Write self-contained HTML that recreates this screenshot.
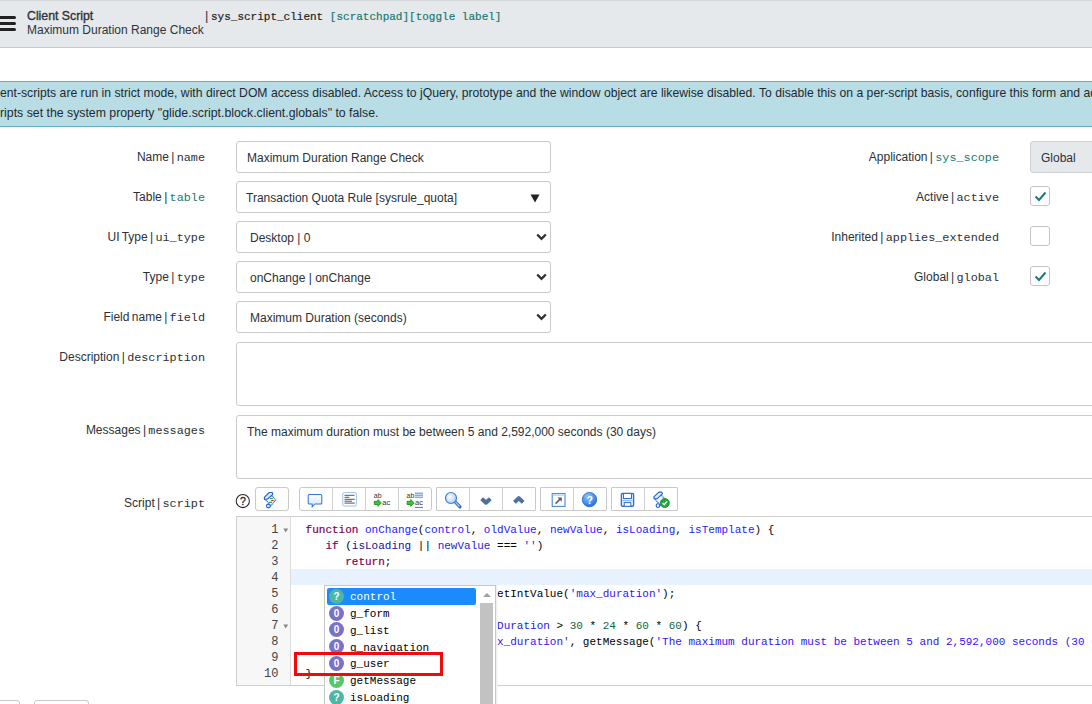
<!DOCTYPE html>
<html><head><meta charset="utf-8">
<style>
*{box-sizing:border-box;margin:0;padding:0}
html,body{width:1092px;height:704px;overflow:hidden;background:#fff}
body{position:relative;font-family:"Liberation Sans",sans-serif;font-size:12px;color:#2b3137}
.a{position:absolute;white-space:pre}
.mono{font-family:"Liberation Mono",monospace}
#hdr{position:absolute;left:0;top:0;width:1092px;height:48px;background:#e6e9eb;border-top:1px solid #d5d8db;border-bottom:1px solid #c6c9cc}
.bar{position:absolute;left:0;width:16px;height:3px;background:#222;border-radius:0 2px 2px 0}
#info{position:absolute;left:-20px;top:81px;width:1140px;height:46px;background:#b8dde4;border:1px solid #5cb2c2}
.inp{position:absolute;left:236px;width:315px;height:32px;border:1px solid #cbcbcb;border-radius:3px;background:#fff}
.lbl{position:absolute;text-align:right;word-spacing:-1px;white-space:pre;line-height:20px;color:#2b3137}
.lm{font-family:"Liberation Mono",monospace;font-size:11.8px}
.teal{color:#177a70}
.chk{position:absolute;left:1030px;width:20px;height:20px;border:1px solid #c4c4c4;border-radius:3px;background:#fff}
.btn{position:absolute;top:487px;height:24px;border:1px solid #c9c9c9;border-radius:3px;background:#fff}
.div{position:absolute;top:0;width:1px;height:22px;background:#d0d0d0}
#ed{position:absolute;left:236px;top:516px;width:870px;height:170px;border:1px solid #cfcfcf;background:#fff}
#gut{position:absolute;left:0;top:0;width:54px;height:168px;background:#f7f7f7;border-right:1px solid #dddddd}
.ln{position:absolute;margin-top:0.5px;right:826.5px;text-align:right;font-family:"Liberation Mono",monospace;font-size:12px;line-height:16px;color:#444}
.code{position:absolute;left:68.6px;margin-top:1px;font-family:"Liberation Mono",monospace;font-size:11px;line-height:16px;color:#000;white-space:pre}
.kw{color:#7f0055;-webkit-text-stroke:0.2px #7f0055}
.fn{color:#1c1cff}
.vr{color:#1c1cff}
.v2{color:#14148f}
.v3{color:#2424d0}
.st{color:#3414f0}
.nm{color:#116644}
#pop{position:absolute;left:324px;top:585px;width:172px;height:130px;border:1px solid #c8c8c8;background:#fff;box-shadow:1.5px 0 0 #f0f0f0}
.it{position:absolute;margin-top:0.8px;left:25px;font-family:"Liberation Mono",monospace;font-size:11px;line-height:16px;color:#000}
.ic{position:absolute;left:4px;width:15px;height:15px;border-radius:50%;color:#fff;font-family:"Liberation Sans",sans-serif;font-weight:bold;font-size:10px;line-height:15px;text-align:center}
</style></head><body>

<div id="hdr">
  <div class="bar" style="top:15px"></div>
  <div class="bar" style="top:21px"></div>
  <div class="bar" style="top:27px"></div>
  <div class="a" style="left:27px;top:6px;font-size:12.3px;-webkit-text-stroke:0.35px #2e3338;color:#2e3338;line-height:18px">Client Script</div>
  <div class="a" style="left:27px;top:20px;font-size:12px;color:#2e3338;line-height:18px">Maximum Duration Range Check</div>
  <div class="a" style="left:205px;top:6px;font-size:13px;color:#2e3338;line-height:18px">|</div>
  <div class="a mono" style="left:211px;top:7px;font-size:11px;color:#222;-webkit-text-stroke:0.2px #222;line-height:18px">sys_script_client <span class="teal" style="-webkit-text-stroke:0.2px #177a70">[scratchpad][toggle label]</span></div>
</div>

<div id="info"></div>
<div class="a" style="left:0;top:83px;font-size:12.2px;line-height:20px;color:#1f2a33">ent-scripts are run in strict mode, with direct DOM access disabled. Access to jQuery, prototype and the window object are likewise disabled. To disable this on a per-script basis, configure this form and add the "isolate_script" column.</div>
<div class="a" style="left:0;top:103px;font-size:12.3px;line-height:20px;color:#1f2a33">ripts set the system property "glide.script.block.client.globals" to false.</div>

<!-- left labels -->
<div class="lbl" style="right:887px;top:147px">Name | <span class="lm">name</span></div>
<div class="lbl" style="right:887px;top:187px">Table | <span class="lm teal">table</span></div>
<div class="lbl" style="right:887px;top:227px">UI Type | <span class="lm">ui_type</span></div>
<div class="lbl" style="right:887px;top:267px">Type | <span class="lm">type</span></div>
<div class="lbl" style="right:887px;top:307px">Field name | <span class="lm">field</span></div>
<div class="lbl" style="right:887px;top:347px">Description | <span class="lm">description</span></div>
<div class="lbl" style="right:887px;top:420px">Messages | <span class="lm">messages</span></div>
<div class="lbl" style="right:887px;top:493px">Script | <span class="lm">script</span></div>

<!-- inputs -->
<div class="inp" style="top:141px"><div class="a" style="left:10px;top:6px;line-height:20px">Maximum Duration Range Check</div></div>
<div class="inp" style="top:181px"><div class="a" style="left:9px;top:6px;line-height:20px">Transaction Quota Rule [sysrule_quota]</div>
  <svg class="a" style="left:293px;top:12px" width="10" height="9" viewBox="0 0 10 9"><path d="M0.5 0.5H9.5L5 8.5Z" fill="#222"/></svg></div>
<div class="inp" style="top:221px"><div class="a" style="left:13px;top:6px;line-height:20px">Desktop | 0</div>
  <svg class="a" style="left:299px;top:11px" width="11" height="8" viewBox="0 0 11 8"><path d="M1.2 1.5L5.5 5.8L9.8 1.5" fill="none" stroke="#2b3137" stroke-width="2.3"/></svg></div>
<div class="inp" style="top:261px"><div class="a" style="left:13px;top:6px;line-height:20px">onChange | onChange</div>
  <svg class="a" style="left:299px;top:11px" width="11" height="8" viewBox="0 0 11 8"><path d="M1.2 1.5L5.5 5.8L9.8 1.5" fill="none" stroke="#2b3137" stroke-width="2.3"/></svg></div>
<div class="inp" style="top:301px"><div class="a" style="left:13px;top:6px;line-height:20px">Maximum Duration (seconds)</div>
  <svg class="a" style="left:299px;top:11px" width="11" height="8" viewBox="0 0 11 8"><path d="M1.2 1.5L5.5 5.8L9.8 1.5" fill="none" stroke="#2b3137" stroke-width="2.3"/></svg></div>
<div class="inp" style="top:342px;width:900px;height:64px"></div>
<div class="inp" style="top:415px;width:900px;height:64px"><div class="a" style="left:10px;top:6px;line-height:20px">The maximum duration must be between 5 and 2,592,000 seconds (30 days)</div></div>

<!-- right column -->
<div class="lbl" style="right:93px;top:147px">Application | <span class="lm teal">sys_scope</span></div>
<div class="lbl" style="right:93px;top:187px">Active | <span class="lm">active</span></div>
<div class="lbl" style="right:93px;top:227px">Inherited | <span class="lm">applies_extended</span></div>
<div class="lbl" style="right:93px;top:267px">Global | <span class="lm">global</span></div>
<div class="inp" style="left:1030px;top:141px;width:120px;background:#e6e9eb;border-color:#cfd2d4"><div class="a" style="left:10px;top:6px;line-height:20px">Global</div></div>
<div class="chk" style="top:186px"><svg class="a" style="left:3px;top:4px" width="13" height="11" viewBox="0 0 13 11"><path d="M1.5 5.5L5 9L11.5 1.5" fill="none" stroke="#1f7a73" stroke-width="2"/></svg></div>
<div class="chk" style="top:226px"></div>
<div class="chk" style="top:266px"><svg class="a" style="left:3px;top:4px" width="13" height="11" viewBox="0 0 13 11"><path d="M1.5 5.5L5 9L11.5 1.5" fill="none" stroke="#1f7a73" stroke-width="2"/></svg></div>

<!-- toolbar -->
<svg class="a" style="left:230px;top:485px;z-index:2" width="460" height="30" viewBox="230 485 460 30">
<defs>
<linearGradient id="gb" x1="0" y1="0" x2="0" y2="1"><stop offset="0" stop-color="#ffffff"/><stop offset="1" stop-color="#d6e4f7"/></linearGradient>
<radialGradient id="gm" cx="0.4" cy="0.4" r="0.7"><stop offset="0" stop-color="#ffffff"/><stop offset="1" stop-color="#9ccaf5"/></radialGradient>
<radialGradient id="gh" cx="0.4" cy="0.3" r="0.8"><stop offset="0" stop-color="#8cc8ff"/><stop offset="1" stop-color="#1565d8"/></radialGradient>
</defs>
<!-- help circle -->
<circle cx="242.8" cy="501" r="6.6" fill="none" stroke="#22252a" stroke-width="1.05"/>
<text x="242.9" y="505.2" font-family="Liberation Sans" font-size="10.5" text-anchor="middle" fill="#22252a" stroke="#22252a" stroke-width="0.3">?</text>
<!-- scroll -->
<path d="M264.6 498.4 L268.8 503.6 L270 506.6 L275.9 500 L271.6 495.4 Z" fill="#f2f7ff" stroke="#2a6ae0" stroke-width="1.1" stroke-linejoin="round" stroke-dasharray="1.3 0.5"/>
<path d="M264.3 497.3 L269.3 492.5 L272.2 492.5 L272.8 494.3 L267.6 499 L264.5 499.4 Z" fill="#dfeafb" stroke="#1e5fd8" stroke-width="1.1" stroke-linejoin="round"/>
<circle cx="268.4" cy="506" r="1.9" fill="#e8f0ff" stroke="#1e5fd8" stroke-width="1.1"/>
<path d="M270 498.5h2.8M269.1 502.4h2.8" stroke="#1fae1f" stroke-width="1.1"/>
<path d="M271.2 500.5h2.6" stroke="#e02818" stroke-width="1.1"/>
<!-- speech bubble -->
<path d="M309.2 494.5 H320.8 Q321.8 494.5 321.8 495.5 V503 Q321.8 504 320.8 504 H315 L312.2 506.8 V504 H309.2 Q308.2 504 308.2 503 V495.5 Q308.2 494.5 309.2 494.5 Z" fill="url(#gb)" stroke="#3276d8" stroke-width="1.05"/>
<!-- format doc -->
<rect x="342.8" y="492.6" width="13.6" height="13.4" rx="1.5" fill="#fff" stroke="#9dbff0" stroke-width="1"/>
<path d="M344.5 495.3h10M344.5 497.3h4.8M344.5 499.3h10.3M344.5 501.2h7.5M344.5 503.1h10.3" stroke="#555" stroke-width="1"/>
<!-- replace -->
<text x="373.8" y="498" font-family="Liberation Sans" font-size="7" fill="#333">ab</text>
<path d="M374.3 501.3h3.6v-1.8l3.5 3.4l-3.5 3.4v-1.8h-3.6z" fill="#3cc43c" stroke="#138a13" stroke-width="0.8"/>
<text x="382.3" y="505.2" font-family="Liberation Sans" font-size="7.5" fill="#333">ac</text>
<!-- replace all -->
<text x="406.6" y="498" font-family="Liberation Sans" font-size="7" fill="#333">ab</text>
<path d="M415 493.2h8M415 495.2h8M415 497.2h8" stroke="#3a78d8" stroke-width="0.9"/>
<path d="M407.1 501.3h3.6v-1.8l3.5 3.4l-3.5 3.4v-1.8h-3.6z" fill="#3cc43c" stroke="#138a13" stroke-width="0.8"/>
<text x="415" y="505.2" font-family="Liberation Sans" font-size="7.5" fill="#333">ac</text>
<path d="M415 507.4h8" stroke="#3a78d8" stroke-width="1"/>
<!-- magnifier -->
<path d="M455.2 501.8 L460 506.8" stroke="#2f66c0" stroke-width="3.2" stroke-linecap="round"/>
<path d="M455.4 502 L459.6 506.4" stroke="#9cc6f0" stroke-width="1.4"/>
<circle cx="451" cy="498" r="5.5" fill="url(#gm)" stroke="#3d7fd9" stroke-width="1.2"/>
<!-- down chevron -->
<path d="M481.7 498.8 L486 502.6 L490.3 498.8" fill="none" stroke="#3a7be0" stroke-width="4.2" stroke-linejoin="round"/>
<path d="M481.7 498.8 L486 502.6 L490.3 498.8" fill="none" stroke="#6a6a6a" stroke-width="2.2" stroke-linejoin="round"/>
<!-- up chevron -->
<path d="M514.5 502.2 L518.8 498.3 L523.1 502.2" fill="none" stroke="#3a7be0" stroke-width="4.2" stroke-linejoin="round"/>
<path d="M514.5 502.2 L518.8 498.3 L523.1 502.2" fill="none" stroke="#6a6a6a" stroke-width="2.2" stroke-linejoin="round"/>
<!-- open window -->
<rect x="552.2" y="493.6" width="12.8" height="12.8" fill="#fff" stroke="#4a86d8" stroke-width="1.1"/>
<path d="M552.8 495.2h11.6" stroke="#c4daf4" stroke-width="1.6"/>
<path d="M555.6 503.6 L560.6 498.6" stroke="#506070" stroke-width="1.5"/>
<path d="M557.4 497.4h4.4v4.4z" fill="#506070"/>
<!-- help blue -->
<circle cx="589.5" cy="499.6" r="7.2" fill="url(#gh)" stroke="#2a66c8" stroke-width="0.8"/>
<text x="589.6" y="503.6" font-family="Liberation Sans" font-size="10.5" font-weight="bold" text-anchor="middle" fill="#fff">?</text>
<!-- floppy -->
<rect x="621.4" y="493.5" width="12.2" height="12.8" rx="1.2" fill="#eef5ff" stroke="#2f6fd8" stroke-width="1.4"/>
<rect x="623.5" y="493.5" width="8" height="5" fill="#fff" stroke="#2f6fd8" stroke-width="1"/>
<path d="M622.3 500.6h10.4" stroke="#8fc0f0" stroke-width="1.4"/>
<rect x="624.2" y="502.6" width="6.6" height="3.7" fill="#fff" stroke="#2f6fd8" stroke-width="1"/>
<!-- check scroll -->
<g transform="translate(389.6,-0.4)">
<path d="M264.6 498.4 L268.8 503.6 L270 506.6 L275.9 500 L271.6 495.4 Z" fill="#f2f7ff" stroke="#2a6ae0" stroke-width="1.1" stroke-linejoin="round" stroke-dasharray="1.3 0.5"/>
<path d="M264.3 497.3 L269.3 492.5 L272.2 492.5 L272.8 494.3 L267.6 499 L264.5 499.4 Z" fill="#dfeafb" stroke="#1e5fd8" stroke-width="1.1" stroke-linejoin="round"/>
<circle cx="268.4" cy="506" r="1.9" fill="#e8f0ff" stroke="#1e5fd8" stroke-width="1.1"/>
</g>
<circle cx="664.8" cy="503" r="4.5" fill="#26a640" stroke="#118a28" stroke-width="0.8"/>
<path d="M662.6 503 L664.2 504.7 L667.1 501.3" fill="none" stroke="#fff" stroke-width="1.3"/>
</svg>
<div class="btn" style="left:255px;width:34px"></div>
<div class="btn" style="left:299px;width:133px"><div class="div" style="left:32px"></div><div class="div" style="left:65px"></div><div class="div" style="left:98px"></div></div>
<div class="btn" style="left:436px;width:100px;border-radius:1px"><div class="div" style="left:32px"></div><div class="div" style="left:65px"></div></div>
<div class="btn" style="left:540px;width:67px;border-radius:1px"><div class="div" style="left:32px"></div></div>
<div class="btn" style="left:611px;width:67px;border-radius:1px"><div class="div" style="left:32px"></div></div>

<!-- editor -->
<div id="ed">
  <div id="gut"></div>
  <div class="a" style="left:54px;top:52px;width:900px;height:16px;background:#e8f2ff"></div>
  <svg class="a" style="left:46px;top:11px" width="6" height="5" viewBox="0 0 6 5"><path d="M0.3 0.5H5.2L2.75 4.5Z" fill="#8a8a8a"/></svg>
  <svg class="a" style="left:46px;top:107px" width="6" height="5" viewBox="0 0 6 5"><path d="M0.3 0.5H5.2L2.75 4.5Z" fill="#8a8a8a"/></svg>
  <div class="ln" style="top:4px">1</div>
  <div class="ln" style="top:20px">2</div>
  <div class="ln" style="top:36px">3</div>
  <div class="ln" style="top:52px">4</div>
  <div class="ln" style="top:68px">5</div>
  <div class="ln" style="top:84px">6</div>
  <div class="ln" style="top:100px">7</div>
  <div class="ln" style="top:116px">8</div>
  <div class="ln" style="top:132px">9</div>
  <div class="ln" style="top:148px">10</div>
  <div class="code" style="top:4px"><span class="kw">function</span> <span class="fn">onChange</span>(<span class="vr">control</span>, <span class="vr">oldValue</span>, <span class="vr">newValue</span>, <span class="vr">isLoading</span>, <span class="vr">isTemplate</span>) {</div>
  <div class="code" style="top:20px">   <span class="kw">if</span> (<span class="v2">isLoading</span> || <span class="v3">newValue</span> === <span class="st">''</span>)</div>
  <div class="code" style="top:36px">      <span class="kw">return</span>;</div>
  <div class="code" style="top:68px">   <span class="kw">var</span> <span class="vr">maxDuration</span> = g_form.getIntValue(<span class="st">'max_duration'</span>);</div>
  <div class="code" style="top:100px">   <span class="kw">if</span> (<span class="v3">maxDuration</span> &lt; <span class="nm">5</span> || <span class="v3">maxDuration</span> &gt; <span class="nm">30</span> * <span class="nm">24</span> * <span class="nm">60</span> * <span class="nm">60</span>) {</div>
  <div class="code" style="top:116px">      g_form.showFieldMsg(<span class="st">'max_duration'</span>, getMessage(<span class="st">'The maximum duration must be between 5 and 2,592,000 seconds (30 days)'</span>));</div>
  <div class="code" style="top:132px">   }</div>
  <div class="code" style="top:148px">}</div>
</div>

<!-- popup -->
<div id="pop">
  <div class="a" style="left:2px;top:2px;width:149px;height:17px;background:#1a8cff;border-radius:2px"></div>
  <div class="ic" style="top:2.80px;background:#4cb8a4">?</div>
  <div class="it" style="top:2.30px;color:#fff">control</div>
  <div class="ic" style="top:19.63px;background:#7a72c6">0</div>
  <div class="it" style="top:19.13px;">g_form</div>
  <div class="ic" style="top:36.46px;background:#7a72c6">0</div>
  <div class="it" style="top:35.96px;">g_list</div>
  <div class="ic" style="top:53.29px;background:#7a72c6">0</div>
  <div class="it" style="top:52.79px;">g_navigation</div>
  <div class="ic" style="top:70.12px;background:#7a72c6">0</div>
  <div class="it" style="top:69.62px;">g_user</div>
  <div class="ic" style="top:86.95px;background:#5cc46a">F</div>
  <div class="it" style="top:86.45px;">getMessage</div>
  <div class="ic" style="top:103.78px;background:#4cb8a4">?</div>
  <div class="it" style="top:103.28px;">isLoading</div>
  <div class="a" style="left:155px;top:17px;width:13px;height:120px;background:#c2c2c2"></div>
  <svg class="a" style="left:156px;top:5px" width="12" height="8" viewBox="0 0 12 8"><path d="M2 6L6 2L10 6Z" fill="#a0a0a0"/></svg>
</div>

<!-- red rect -->
<div class="a" style="left:294px;top:652px;width:149px;height:24px;border:3px solid #f20a0a"></div>

<!-- bottom buttons -->
<div class="a" style="left:-40px;top:700px;width:60px;height:20px;border:1px solid #c9c9c9;border-radius:3px"></div>
<div class="a" style="left:34px;top:700px;width:55px;height:20px;border:1px solid #c9c9c9;border-radius:3px"></div>

</body></html>
